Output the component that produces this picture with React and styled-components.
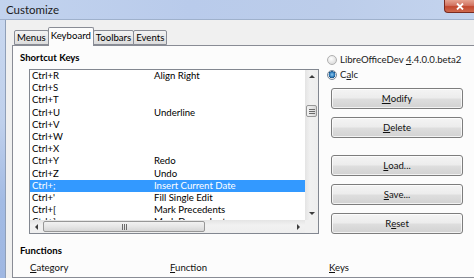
import React from "react";
import styled, { createGlobalStyle } from "styled-components";

const GlobalStyle = createGlobalStyle`
  html, body {
    margin: 0;
    padding: 0;
  }
  body {
    width: 474px;
    height: 278px;
    overflow: hidden;
    font-family: Lato, "Liberation Sans", sans-serif;
    font-size: 9.6px;
    color: #000;
  }
`;

const Window = styled.div`
  width: 474px;
  height: 278px;
  display: flex;
  flex-direction: column;
  overflow: hidden;
`;

const TitleBar = styled.div`
  height: 20px;
  flex: none;
  display: flex;
  align-items: flex-start;
  justify-content: space-between;
  box-sizing: border-box;
  border-bottom: 1px solid #9fb1cc;
  background: linear-gradient(90deg, #c2d3ee 0%, #b9cbeb 40%, #bccdea 70%, #c4d4ee 100%);
`;

const Title = styled.div`
  font-size: 11.5px;
  line-height: 19px;
  padding-left: 6px;
  color: #1c1c1c;
`;

const CloseButton = styled.div`
  width: 30px;
  height: 13px;
  box-sizing: border-box;
  border: 1px solid #7a2b20;
  border-top: none;
  border-right: none;
  border-radius: 0 0 0 4px;
  background: linear-gradient(180deg, #e6a391 0%, #d27462 45%, #c2482f 55%, #cf6a4f 100%);
  display: flex;
  align-items: center;
  justify-content: center;
`;

const Body = styled.div`
  flex: 1;
  display: flex;
`;

const Frame = styled.div`
  width: 5px;
  flex: none;
  background: linear-gradient(180deg, #c8d7ef 0%, #bfd0ec 40%, #a3bbe4 70%, #9fb7e2 100%);
`;

const Content = styled.div`
  flex: 1;
  display: flex;
  flex-direction: column;
  background: #f0f0f0;
  border-left: 1px solid #8f9fb8;
  padding: 7px 0 0 6px;
`;

const TabRow = styled.div`
  display: flex;
  align-items: flex-end;
  height: 18px;
  padding-left: 2px;
  position: relative;
  z-index: 1;
`;

const Tab = styled.div`
  box-sizing: border-box;
  height: ${(p) => (p.$active ? "19px" : "15px")};
  margin-bottom: ${(p) => (p.$active ? "-1px" : "0")};
  margin-left: -1px;
  padding: 0 2px;
  border: 1px solid #898c95;
  border-bottom: ${(p) => (p.$active ? "none" : "1px solid #898c95")};
  border-radius: 2px 2px 0 0;
  background: ${(p) =>
    p.$active ? "#fcfcfc" : "linear-gradient(180deg, #f3f3f3 0%, #e8e8e8 50%, #dcdcdc 100%)"};
  line-height: ${(p) => (p.$active ? "16px" : "13px")};
  color: #000;
  position: relative;
  z-index: ${(p) => (p.$active ? 2 : 1)};
  &:first-child {
    margin-left: 0;
  }
`;

const Panel = styled.div`
  flex: 1;
  width: 480px;
  box-sizing: border-box;
  border: 1px solid #898c95;
  background: #fcfcfc;
  padding-top: 6px;
`;

const TopArea = styled.div`
  display: flex;
  align-items: flex-start;
`;

const LeftCol = styled.div`
  width: 306px;
  flex: none;
`;

const Heading = styled.div`
  font-weight: bold;
  line-height: 12px;
  padding-left: 7px;
`;

const ListBox = styled.div`
  margin: 5px 0 0 16px;
  width: 290px;
  height: 165px;
  box-sizing: border-box;
  border: 1px solid #828790;
  background: #fff;
  display: grid;
  grid-template-columns: 1fr 13px;
  grid-template-rows: 1fr 13px;
`;

const Rows = styled.div`
  overflow: hidden;
`;

const Row = styled.div`
  height: 12.2px;
  line-height: 12.2px;
  display: grid;
  grid-template-columns: 122px 1fr;
  padding-left: 2px;
  white-space: nowrap;
  background: ${(p) => (p.$selected ? "#3399ff" : "transparent")};
  color: ${(p) => (p.$selected ? "#fff" : "#000")};
`;

const VScroll = styled.div`
  display: flex;
  flex-direction: column;
  background: linear-gradient(90deg, #e4e4e4 0%, #f1f1f1 40%, #eeeeee 100%);
`;

const HScroll = styled.div`
  display: flex;
  background: linear-gradient(180deg, #e4e4e4 0%, #f1f1f1 40%, #eeeeee 100%);
`;

const Corner = styled.div`
  background: #f0f0f0;
`;

const ArrowBox = styled.div`
  width: 13px;
  height: 13px;
  flex: none;
  display: flex;
  align-items: center;
  justify-content: center;
`;

const Spacer = styled.div`
  flex: ${(p) => (p.$size ? "none" : 1)};
  height: ${(p) => (p.$size && p.$vertical ? p.$size + "px" : "auto")};
  width: ${(p) => (p.$size && !p.$vertical ? p.$size + "px" : "auto")};
`;

const Thumb = styled.div`
  flex: none;
  box-sizing: border-box;
  width: ${(p) => p.$w}px;
  height: ${(p) => p.$h}px;
  margin: ${(p) => (p.$vertical ? "0 1px" : "1px 0")};
  border: 1px solid #979797;
  border-radius: 2px;
  background: ${(p) =>
    p.$vertical
      ? "linear-gradient(90deg, #f2f2f2 0%, #e6e6e6 50%, #d6d6d6 100%)"
      : "linear-gradient(180deg, #f2f2f2 0%, #e6e6e6 50%, #d6d6d6 100%)"};
  display: flex;
  align-items: center;
  justify-content: center;
`;

const RightCol = styled.div`
  margin-left: 8px;
  display: flex;
  flex-direction: column;
`;

const RadioRow = styled.div`
  display: flex;
  align-items: center;
  height: 15px;
  white-space: nowrap;
  color: #1a1a1a;
`;

const RadioCircle = styled.span`
  width: 10px;
  height: 10px;
  box-sizing: border-box;
  border-radius: 50%;
  margin: 0 3px 0 0;
  border: 1px solid ${(p) => (p.$checked ? "#7b8a9c" : "#b0b0b0")};
  background: ${(p) =>
    p.$checked
      ? "radial-gradient(circle at 50% 45%, #8ec9f0 0%, #2a78b8 42%, #1d5688 55%, #e8e8e8 60%, #f4f4f4 100%)"
      : "radial-gradient(circle at 40% 35%, #ffffff 0%, #e8e8e8 50%, #d4d4d4 100%)"};
`;

const ButtonStack = styled.div`
  display: flex;
  flex-direction: column;
  gap: 8px;
  margin: ${(p) => p.$mt}px 0 0 4px;
`;

const Button = styled.div`
  width: 132px;
  height: 21px;
  box-sizing: border-box;
  border: 1px solid #7d7d7d;
  border-radius: 3px;
  background: linear-gradient(180deg, #f4f4f4 0%, #ececec 48%, #dedede 52%, #d2d2d2 100%);
  box-shadow: inset 0 0 0 1px rgba(255, 255, 255, 0.7);
  display: flex;
  align-items: center;
  justify-content: center;
  color: #111;
`;

const FunctionsHeading = styled(Heading)`
  margin-top: 11px;
`;

const LabelRow = styled.div`
  margin-top: 5px;
  display: grid;
  grid-template-columns: 140px 159px auto;
  padding-left: 17px;
  line-height: 12px;
  color: #111;
`;

const Arrow = ({ dir }) => {
  const pts = {
    up: "1,4 4,1 7,4",
    down: "1,1 4,4 7,1",
    left: "4,1 1,4 4,7",
    right: "1,1 4,4 1,7",
  }[dir];
  const vertical = dir === "up" || dir === "down";
  return (
    <svg width={vertical ? 8 : 5} height={vertical ? 5 : 8} viewBox={vertical ? "0 0 8 5" : "0 0 5 8"}>
      <polygon points={pts} fill="#3c3c3c" />
    </svg>
  );
};

const Grip = ({ vertical }) =>
  vertical ? (
    <svg width="6" height="5" viewBox="0 0 6 5">
      <path d="M0 0.5H6M0 2.5H6M0 4.5H6" stroke="#6a6a6a" strokeWidth="1" />
    </svg>
  ) : (
    <svg width="5" height="6" viewBox="0 0 5 6">
      <path d="M0.5 0V6M2.5 0V6M4.5 0V6" stroke="#6a6a6a" strokeWidth="1" />
    </svg>
  );

const rows = [
  ["Ctrl+R", "Align Right"],
  ["Ctrl+S", ""],
  ["Ctrl+T", ""],
  ["Ctrl+U", "Underline"],
  ["Ctrl+V", ""],
  ["Ctrl+W", ""],
  ["Ctrl+X", ""],
  ["Ctrl+Y", "Redo"],
  ["Ctrl+Z", "Undo"],
  ["Ctrl+;", "Insert Current Date"],
  ["Ctrl+'", "Fill Single Edit"],
  ["Ctrl+[", "Mark Precedents"],
  ["Ctrl+]", "Mark Dependents"],
];

export default function App() {
  return (
    <Window>
      <GlobalStyle />
      <TitleBar>
        <Title>Customize</Title>
        <CloseButton>
          <svg width="8" height="7" viewBox="0 0 8 7">
            <path d="M1 0.5L7 6.5M7 0.5L1 6.5" stroke="#fff" strokeWidth="1.8" />
          </svg>
        </CloseButton>
      </TitleBar>
      <Body>
        <Frame />
        <Content>
          <TabRow>
            <Tab>Menus</Tab>
            <Tab $active>Keyboard</Tab>
            <Tab>Toolbars</Tab>
            <Tab>Events</Tab>
          </TabRow>
          <Panel>
            <TopArea>
              <LeftCol>
                <Heading>Shortcut Keys</Heading>
                <ListBox>
                  <Rows>
                    {rows.map(([k, f], i) => (
                      <Row key={k} $selected={i === 9}>
                        <span>{k}</span>
                        <span>{f}</span>
                      </Row>
                    ))}
                  </Rows>
                  <VScroll>
                    <ArrowBox>
                      <Arrow dir="up" />
                    </ArrowBox>
                    <Spacer $size={22} $vertical />
                    <Thumb $vertical $w={11} $h={12}>
                      <Grip vertical />
                    </Thumb>
                    <Spacer />
                    <ArrowBox>
                      <Arrow dir="down" />
                    </ArrowBox>
                  </VScroll>
                  <HScroll>
                    <ArrowBox>
                      <Arrow dir="left" />
                    </ArrowBox>
                    <Thumb $w={162} $h={11}>
                      <Grip />
                    </Thumb>
                    <Spacer />
                    <ArrowBox>
                      <Arrow dir="right" />
                    </ArrowBox>
                  </HScroll>
                  <Corner />
                </ListBox>
              </LeftCol>
              <RightCol>
                <RadioRow>
                  <RadioCircle />
                  LibreOfficeDev&nbsp;<u>4</u>.4.0.0.beta2
                </RadioRow>
                <RadioRow>
                  <RadioCircle $checked />
                  C<u>a</u>lc
                </RadioRow>
                <ButtonStack $mt={6}>
                  <Button>
                    <u>M</u>odify
                  </Button>
                  <Button>
                    <u>D</u>elete
                  </Button>
                </ButtonStack>
                <ButtonStack $mt={17}>
                  <Button>
                    <u>L</u>oad...
                  </Button>
                  <Button>
                    <u>S</u>ave...
                  </Button>
                  <Button>
                    R<u>e</u>set
                  </Button>
                </ButtonStack>
              </RightCol>
            </TopArea>
            <FunctionsHeading>Functions</FunctionsHeading>
            <LabelRow>
              <span>
                <u>C</u>ategory
              </span>
              <span>
                <u>F</u>unction
              </span>
              <span>
                <u>K</u>eys
              </span>
            </LabelRow>
          </Panel>
        </Content>
      </Body>
    </Window>
  );
}
